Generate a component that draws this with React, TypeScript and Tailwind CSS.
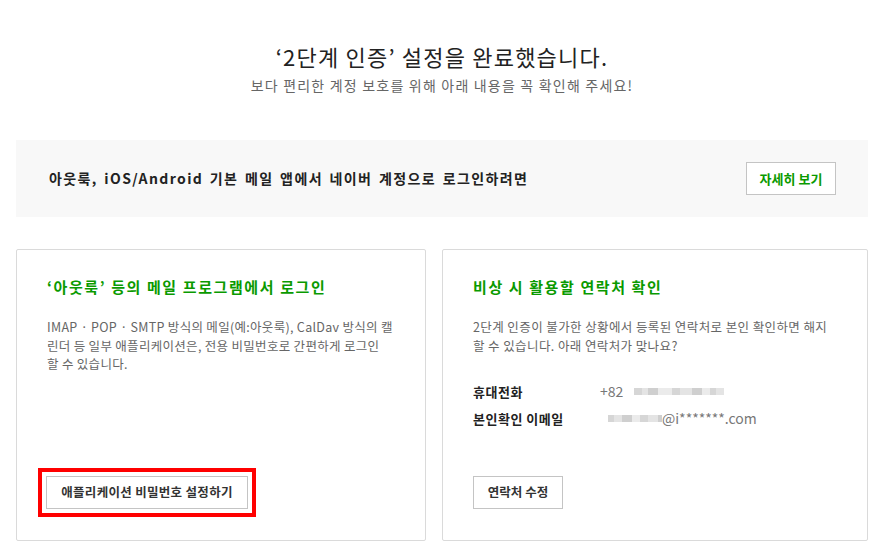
import React from "react";

const font = { fontFamily: '"Noto Sans CJK KR", "Noto Sans", sans-serif' };

function Blur({ widths }: { widths: number[] }) {
  // blurred/masked personal data
  const shades = ["bg-[#d6d6d6]", "bg-[#e4e4e4]", "bg-[#cfcfcf]", "bg-[#ebebeb]"];
  return (
    <span className="inline-flex items-center h-[9px]">
      {widths.map((w, i) => (
        <span key={i} className={`inline-block h-[7px] ${shades[i % 4]}`} style={{ width: w }} />
      ))}
    </span>
  );
}

export default function App() {
  return (
    <div className="w-[884px] h-[558px] bg-white text-[#333] overflow-hidden" style={font}>
      <div className="pt-[40px] text-center">
        <h1 className="text-[22px] leading-[32px] text-[#222] tracking-[1.2px]">
          ‘2단계 인증’ 설정을 완료했습니다.
        </h1>
        <p className="mt-[2px] text-[14px] leading-[22px] text-[#666] tracking-[1.2px]">
          보다 편리한 계정 보호를 위해 아래 내용을 꼭 확인해 주세요!
        </p>
      </div>

      <div className="mx-4 mt-[44px] h-[77px] bg-[#f8f8f8] flex items-center justify-between pl-[33px] pr-[32px]">
        <span className="text-[14px] font-bold text-[#222] tracking-[1.4px] [word-spacing:2px]">
          아웃룩, iOS/Android 기본 메일 앱에서 네이버 계정으로 로그인하려면
        </span>
        <button className="w-[90px] h-[33px] bg-white border border-[#c4c4c4] text-[13px] font-bold text-[#0a9a00]">
          자세히 보기
        </button>
      </div>

      <div className="mx-4 mt-8 grid grid-cols-[410px_426px] gap-4">
        <div className="h-[292px] border border-[#dadada] rounded-[2px] pl-[30px] pr-[32px] pt-[26px] pb-[23px] flex flex-col">
          <h2 className="text-[15px] leading-[22px] font-bold text-[#0a9a00] tracking-[1.6px]">
            ‘아웃룩’ 등의 메일 프로그램에서 로그인
          </h2>
          <p className="mt-[20px] text-[12.5px] leading-[18.5px] text-[#666] tracking-[0.3px] break-all">
            IMAP · POP · SMTP 방식의 메일(예:아웃룩), CalDav 방식의 캘린더 등 일부 애플리케이션은, 전용 비밀번호로 간편하게 로그인
            <br />할 수 있습니다.
          </p>
          <div className="mt-auto -ml-[9px] self-start border-4 border-[#ff0000] p-[4px]">
            <button className="w-[202px] h-[33px] bg-white border border-[#c4c4c4] text-[12.5px] font-bold text-[#333] tracking-[0.3px]">
              애플리케이션 비밀번호 설정하기
            </button>
          </div>
        </div>

        <div className="h-[292px] border border-[#dadada] rounded-[2px] pl-[30px] pr-[34px] pt-[26px] pb-[31px] flex flex-col">
          <h2 className="text-[15px] leading-[22px] font-bold text-[#0a9a00] tracking-[1.6px]">
            비상 시 활용할 연락처 확인
          </h2>
          <p className="mt-[20px] text-[12.5px] leading-[18.5px] text-[#666] tracking-[0.4px] break-all">
            2단계 인증이 불가한 상황에서 등록된 연락처로 본인 확인하면 해지할 수 있습니다. 아래 연락처가 맞나요?
          </p>
          <div className="mt-[27px] flex flex-col gap-[8px] text-[13px]">
            <div className="flex items-center h-[19px]">
              <span className="w-[127px] font-bold text-[#222] tracking-[0.5px]">휴대전화</span>
              <span className="text-[#777] text-[14px] mr-[11px]">+82</span>
              <Blur widths={[8, 6, 10, 14, 8, 12, 10, 8, 6, 8]} />
            </div>
            <div className="flex items-center h-[19px]">
              <span className="w-[135px] font-bold text-[#222] tracking-[0.5px]">본인확인 이메일</span>
              <Blur widths={[6, 8, 10, 8, 8, 10, 4]} />
              <span className="text-[#777] text-[14px]">@i*******.com</span>
            </div>
          </div>
          <button className="mt-auto w-[90px] h-[33px] bg-white border border-[#c4c4c4] text-[12.5px] font-bold text-[#333]">
            연락처 수정
          </button>
        </div>
      </div>
    </div>
  );
}
